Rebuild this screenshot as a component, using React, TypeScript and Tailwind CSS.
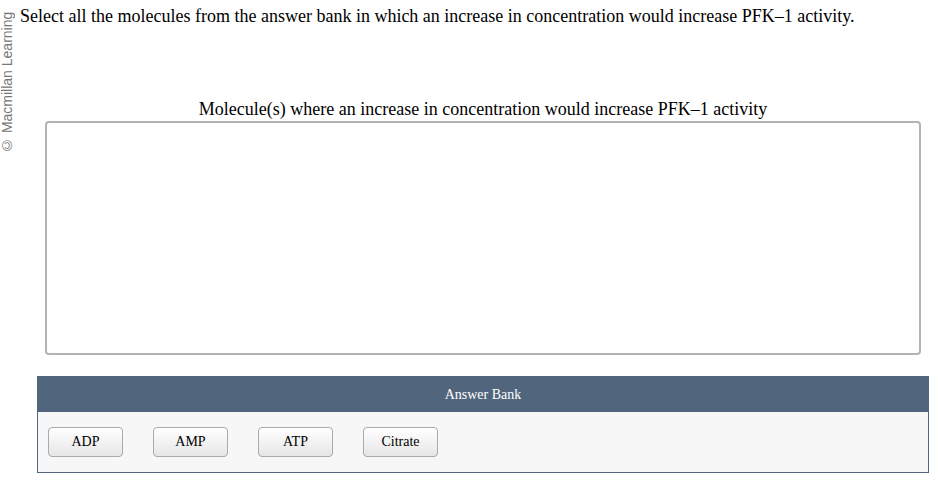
const answers = ['ADP', 'AMP', 'ATP', 'Citrate']

export default function App() {
  return (
    <div className="flex w-[938px] h-[498px] bg-white font-['Liberation_Serif',serif] text-black">
      {/* Side credit, reads bottom to top */}
      <div className="w-[20px] shrink-0 pt-[12px]">
        <div className="h-[141px] w-[15px] [writing-mode:vertical-rl] rotate-180 font-['Liberation_Sans',Arial,sans-serif] text-[14px] leading-[15px] text-[#777] whitespace-nowrap">
          © Macmillan Learning
        </div>
      </div>

      <div className="flex-1 flex flex-col">
        <p className="pt-[6px] text-[18px] leading-[20px]">
          Select all the molecules from the answer bank in which an increase in concentration would increase PFK–1 activity.
        </p>

        <div className="mt-[73px] ml-[17px] w-[892px]">
          <div className="px-[8px]">
            <p className="text-center text-[18px] leading-[20px]">
              Molecule(s) where an increase in concentration would increase PFK–1 activity
            </p>
            <div className="mt-[2px] h-[234px] rounded-[4px] border-2 border-[#b3b3b3] bg-white" />
          </div>

          {/* Answer bank */}
          <div className="mt-[21px] border border-[#51657c]">
            <div className="h-[35px] bg-[#51657c] flex items-center justify-center text-white text-[14px]">
              Answer Bank
            </div>
            <div className="bg-[#f7f7f7] flex gap-[30px] px-[10px] pt-[15px] pb-[15px]">
              {answers.map((a) => (
                <button
                  key={a}
                  className="w-[75px] h-[30px] rounded-[4px] border border-[#aaa] bg-gradient-to-b from-white to-[#e6e6e6] text-[14px] leading-none"
                >
                  {a}
                </button>
              ))}
            </div>
          </div>
        </div>
      </div>
    </div>
  )
}
